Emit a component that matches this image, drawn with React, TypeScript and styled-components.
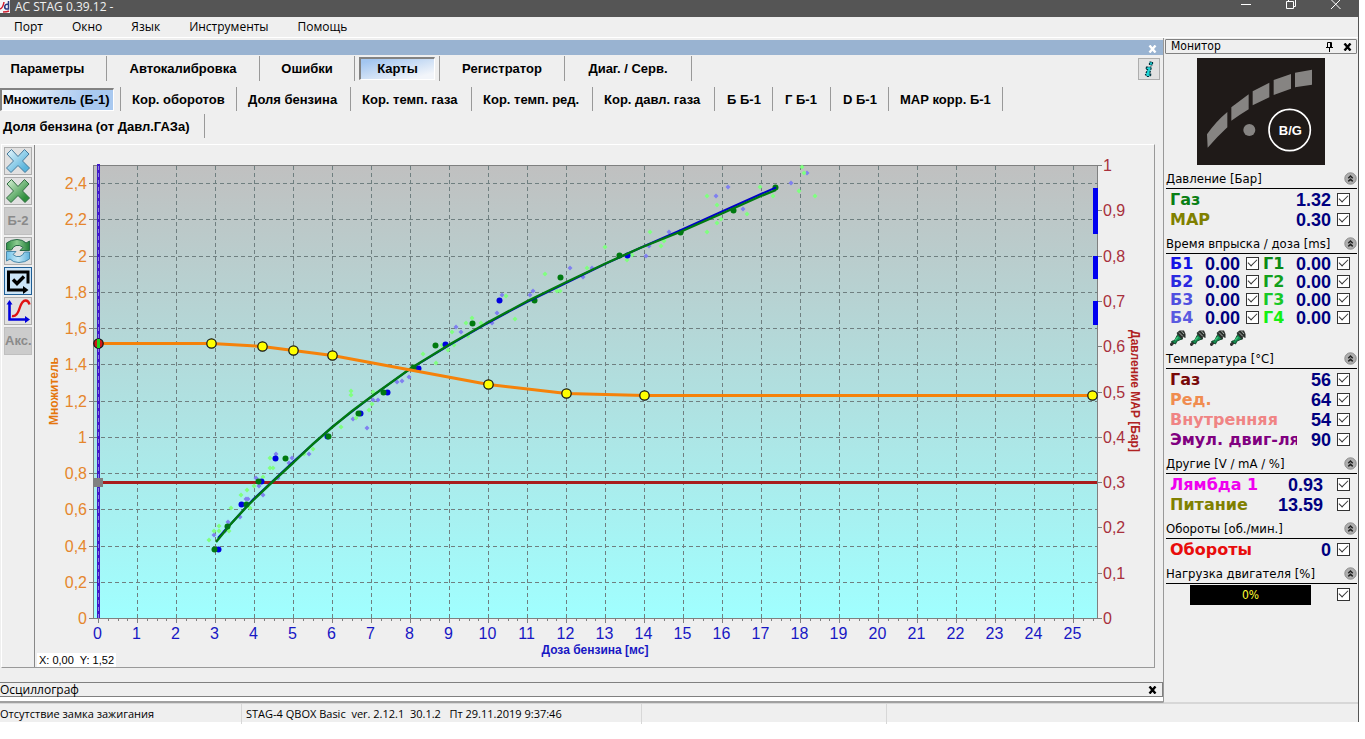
import React from "react";
import styled, { createGlobalStyle } from "styled-components";

const ui = `"Open Sans", "Noto Sans", sans-serif`;
const arial = `"Liberation Sans", Arial, sans-serif`;
const tahoma = `"DejaVu Sans Condensed", "DejaVu Sans", sans-serif`;

const Global = createGlobalStyle`
  * { box-sizing: border-box; }
  body { margin: 0; background: #fff; color: #000; font-family: ${arial}; }
  button { font: inherit; color: inherit; margin: 0; padding: 0; border: 0; background: none; white-space: nowrap; }
  svg { display: block; }
`;

const Page = styled.div`
  min-height: 100vh;
  padding: 0 6px 17px 0;
  display: flex;
  background: #fff;
`;

const Window = styled.div`
  flex: 1;
  min-width: 0;
  display: flex;
  flex-direction: column;
  background: #efefef;
  border-right: 1px solid #555;
`;

const TitleBar = styled.header`
  height: 17px;
  display: flex;
  align-items: flex-start;
  background: #555;
  color: #f0f0f0;
  font: 12px/14px ${ui};
`;

const AppName = styled.h1`
  flex: 1;
  margin: 0 0 0 5px;
  font: inherit;
`;

const WindowButton = styled.button`
  width: 45px;
  height: 10px;
  display: flex;
  justify-content: center;
`;

const MenuBar = styled.nav`
  height: 21px;
  display: flex;
  align-items: center;
  gap: 29px;
  padding-left: 14px;
  border-bottom: 1px solid #fff;
  font: 12px/16px ${ui};
`;

const Body = styled.div`
  flex: 1;
  display: flex;
  min-height: 0;
`;

const Workspace = styled.main`
  flex: 1;
  min-width: 0;
  display: flex;
  flex-direction: column;
  padding-top: 2px;
`;

const Caption = styled.div`
  height: 15px;
  display: flex;
  justify-content: flex-end;
  align-items: flex-end;
  padding: 0 6px 2px 0;
  background: #99b3d1;
`;

const TabBar = styled.div`
  display: flex;
  align-items: flex-start;
  padding-top: 1px;
`;

const TabCell = styled.div<{ $w: number; $h: number }>`
  width: ${(p) => p.$w}px;
  height: ${(p) => p.$h}px;
  display: flex;
  justify-content: center;
  align-items: center;
  border-right: 1px solid #999;
  font: bold 13px/16px ${arial};

  &:first-child {
    padding-right: 11px;
  }
`;

const Tab = styled.button<{ $on?: boolean; $across?: boolean }>`
  height: 23px;
  padding: 0 ${(p) => (p.$across ? 3 : 16)}px;
  ${(p) =>
    p.$on &&
    `
    border: 1px solid #fff;
    border-top: 2px solid #828282;
    border-left: 2px solid #828282;
    background: ${
      p.$across
        ? "linear-gradient(100deg, #f4f7fc 10%, #a9c9f0 75%)"
        : "linear-gradient(165deg, #a3c6f0 10%, #f2f5fa 85%)"
    };
  `}
`;

const Spacer = styled.div`
  flex: 1;
`;

const InfoButton = styled.button`
  width: 22px;
  height: 22px;
  margin: 2px 3px 0 0;
  display: grid;
  place-items: center;
  background: #e1e1e1;
  border: 1px solid #adadad;
`;

const MapTabs = styled.div`
  display: flex;
  flex-wrap: wrap;
  row-gap: 3px;
  padding: 6px 0;
`;

const MapCell = styled(TabCell)`
  justify-content: flex-start;
  padding: 1px 0 0 ${(p) => (p.$w === 58 ? 9 : 8)}px;

  &:first-child,
  &:last-child {
    padding-left: 0;
    padding-right: 0;
  }
  &:first-child > button {
    padding: 0 3px 0 1px;
  }
`;

const MapPage = styled.section`
  flex: 1;
  min-height: 0;
  margin: 0 8px 14px 1px;
  display: flex;
  border: 1px solid #999;
  border-top-color: #fff;
  border-left-color: #fff;
`;

const ToolBox = styled.div`
  width: 33px;
  padding: 2px;
  display: flex;
  flex-direction: column;
  gap: 2px;
  border-right: 1px solid #888;
`;

const Tool = styled.button<{ $on?: boolean }>`
  width: 28px;
  height: 28px;
  display: grid;
  place-items: center;
  background: ${(p) => (p.$on ? "#cce4f7" : "#e1e1e1")};
  border: 1px solid ${(p) => (p.$on ? "#1f5f96" : "#adadad")};
  font: bold 13px/16px ${arial};

  &:disabled {
    background: #ccc;
    border-color: #bfbfbf;
    color: #8a8a8a;
  }
`;

const ChartArea = styled.div`
  flex: 1;
  min-width: 0;
  position: relative;
`;

const Chart = styled.svg`
  width: 100%;
  height: auto;
  font-family: ${arial};
`;

const Readout = styled.output`
  position: absolute;
  left: 2px;
  bottom: 0;
  padding: 0 2px;
  background: #fff;
  font: 11px/14px ${arial};
  white-space: pre;
`;

const Dock = styled.div`
  height: 15px;
  display: flex;
  align-items: center;
  justify-content: space-between;
  padding-right: 5px;
  border: 1px solid #808080;
  border-left: 0;
  font: 12px/13px ${ui};
`;

const DockEdge = styled.div`
  height: 6px;
  border-top: 4px solid #fff;
  border-bottom: 2px solid #a0a0a0;
`;

const StatusBar = styled.footer`
  height: 19px;
  display: grid;
  grid-template-columns: 242px 400px 245px 1fr;
  border-top: 1px solid #d7d7d7;
  font: 11px/20px ${ui};
  white-space: pre;

  > span {
    padding-left: 4px;
    border-right: 1px solid #d7d7d7;
  }
  > span:first-child {
    padding-left: 0;
  }
`;

const Monitor = styled.aside`
  width: 195px;
  padding: 1px 1px 0 1px;
  border-left: 1px solid #999;
  border-bottom: 1px solid #d7d7d7;
  display: flex;
  flex-direction: column;
`;

const MonitorTitle = styled.div`
  height: 15px;
  display: flex;
  align-items: center;
  gap: 10px;
  padding: 0 4px 0 5px;
  border: 1px solid #808080;
  border-radius: 1px;
  font: 12px/13px ${tahoma};

  > span {
    flex: 1;
  }
`;

const Led = styled.svg`
  width: 128px;
  height: 107px;
  margin: 4px 0 5px 32px;
`;

const Group = styled.section`
  margin: 0 0 5px 1px;
`;

const GroupHead = styled.div`
  height: 19px;
  margin-bottom: 1px;
  display: flex;
  align-items: center;
  justify-content: space-between;
  border-bottom: 1px solid #000;

  h2 {
    margin: 0;
    font: 13px/16px ${tahoma};
    white-space: nowrap;
  }
  button {
    margin-bottom: 2px;
  }
`;

const Line = styled.div<{ $h: number }>`
  height: ${(p) => p.$h}px;
  display: flex;
  align-items: center;
  padding: 0 7px 0 4px;
`;

const Reading = styled.label<{ $inset?: boolean; $grow?: boolean }>`
  flex: ${(p) => (p.$grow ? "1" : "0 0 89px")};
  min-width: 0;
  margin-right: ${(p) => (p.$grow ? 0 : 4)}px;
  display: flex;
  align-items: center;
  justify-content: space-between;
  white-space: nowrap;

  b {
    max-width: 127px;
    overflow: hidden;
    font: bold 16px/18px "DejaVu Sans", sans-serif;
  }
  output {
    margin-left: auto;
    padding-right: ${(p) => (p.$inset ? 14 : 6)}px;
    color: #000080;
    font: bold 18px/18px ${arial};
  }
`;

const Tick = styled.input`
  appearance: none;
  flex: none;
  width: 13px;
  height: 13px;
  margin: 0 0 2px;
  display: grid;
  place-items: center;
  background: #fff;
  border: 1px solid #333;

  &:checked::after {
    content: "";
    width: 8px;
    height: 4px;
    margin-bottom: 3px;
    border-left: 1px solid #333;
    border-bottom: 1px solid #333;
    rotate: -45deg;
  }
`;

const Load = styled.label`
  height: 20px;
  display: flex;
  align-items: center;
  justify-content: space-between;
  padding: 0 7px 0 24px;

  output {
    width: 121px;
    background: #000;
    color: #ff3;
    font: 12px/20px ${tahoma};
    text-align: center;
  }
`;

const Injectors = styled.div`
  height: 18px;
  display: flex;
  gap: 4px;
  padding: 3px 0 0 4px;
`;

const Cross = ({ color }: { color: string }) => (
  <svg width="9" height="8" viewBox="0 0 9 8" aria-hidden="true">
    <path d="M1.5 .5l6 7M7.5 .5l-6 7" stroke={color} strokeWidth="2.4" fill="none" />
  </svg>
);

const Collapse = () => (
  <button type="button" aria-label="Свернуть">
    <svg width="13" height="13" viewBox="0 0 13 13">
      <circle cx="6.5" cy="6.5" r="5.7" fill="#adadad" stroke="#8d8d8d" />
      <path d="M4.3 6.2l2.200-2.200 2.200 2.200M4.300 9.400l2.200-2.200 2.200 2.200" stroke="#222" strokeWidth="1.500" fill="none" />
    </svg>
  </button>
);

const Injector = () => (
  <svg width="16" height="16" viewBox="0 0 16 16" aria-hidden="true">
    <path d="M.5 15.500l3.500-4" stroke="#333" strokeWidth="3" />
    <path d="M1.500 11.500l3-1L8 4l5 4.500-6 2.500-1.500 3z" fill="#159050" stroke="#124a2c" />
    <path d="M6.500 3l3-2.500h4.500l1.500 3.500v4l-2.500-1-1 3z" fill="#2b302c" />
    <path d="M9 2.500l4 4M11.500 1l2.500 3" stroke="#a4aca6" />
    <path d="M5 10l3-3" stroke="#3cc47c" strokeWidth="1.500" />
  </svg>
);

const BigX = ({ from, to, line }: { from: string; to: string; line: string }) => {
  const id = "x" + to.slice(1);
  return (
    <svg width="26" height="26" viewBox="0 0 26 26" aria-hidden="true">
      <defs>
        <linearGradient id={id} x1="0" y1="0" x2="1" y2="1">
          <stop offset=".1" stopColor={from} />
          <stop offset=".8" stopColor={to} />
        </linearGradient>
      </defs>
      <path
        d="M6.500 1.500L13 8.500l6.500-7 4.500 4.500-6.500 7 7 7-4.500 4.500-7-7-7 7L1.500 20l7-7-6.500-7z"
        fill={`url(#${id})`}
        stroke={line}
        strokeLinejoin="round"
      />
    </svg>
  );
};

const Refresh = () => (
  <svg width="26" height="26" viewBox="0 0 26 26" aria-hidden="true">
    <defs>
      <linearGradient id="rg" x1="0" x2="1">
        <stop offset="0" stopColor="#2f8f45" />
        <stop offset=".45" stopColor="#8ccb91" />
        <stop offset="1" stopColor="#23803a" />
      </linearGradient>
      <linearGradient id="rb" x1="0" x2="1">
        <stop offset="0" stopColor="#6cc0e8" />
        <stop offset=".5" stopColor="#c6e8f6" />
        <stop offset="1" stopColor="#5fb2dc" />
      </linearGradient>
    </defs>
    <path d="M1.500 12V5Q6 1.500 12 1.500 18 1.500 21 5L24.500 3V12.500H15L18 9.500Q15 6.500 11 7.500 8 8.500 6.500 12z" fill="url(#rg)" stroke="#2a6a48" />
    <path d="M24.500 14V21Q20 24.500 14 24.500 8 24.500 5 21L1.500 23V13.500H11L8 16.500Q11 19.500 15 18.500 18 17.500 19.500 14z" fill="url(#rb)" stroke="#4a87a8" />
  </svg>
);

const CheckFrame = () => (
  <svg width="26" height="26" viewBox="0 0 26 26" fill="none" stroke="#000" aria-hidden="true">
    <path d="M23 15.500V4H3.500v18H18" strokeWidth="3" />
    <path d="M8 11.500l4 4 7-7" strokeWidth="3.400" />
    <path d="M18 18l5.500 4-5.500 4z" fill="#000" stroke="none" />
  </svg>
);

const Curve = () => (
  <svg width="26" height="26" viewBox="0 0 26 26" fill="none" aria-hidden="true">
    <path d="M4.500 4v17.500H22" stroke="#00d" strokeWidth="2.600" />
    <path d="M1.500 6.500l3-4.500 3 4.500zM20 18l5 3.500-5 3.500z" fill="#00d" />
    <path d="M7 18q5 1 7.500-7.500Q17 2.500 20.500 2.500q3 0 4 4" stroke="#e01010" strokeWidth="2.400" />
  </svg>
);

const mainTabs: [string, number][] = [
  ["Параметры", 107],
  ["Автокалибровка", 153],
  ["Ошибки", 95],
  ["Карты", 85],
  ["Регистратор", 125],
  ["Диаг. / Серв.", 127],
];

const mapTabs: [string, number][] = [
  ["Множитель (Б-1)", 121],
  ["Кор. оборотов", 116],
  ["Доля бензина", 114],
  ["Кор. темп. газа", 121],
  ["Кор. темп. ред.", 121],
  ["Кор. давл. газа", 122],
  ["Б Б-1", 58],
  ["Г Б-1", 58],
  ["D Б-1", 58],
  ["МАР корр. Б-1", 114],
  ["Доля бензина (от Давл.ГАЗа)", 205],
];

const px = (v: number) => 98.5 + 39 * v;
const py = (v: number) => 618.5 - 181.2 * v;
const pr = (v: number) => 618.5 - 453 * v;
const comma = (v: number) => String(Math.round(v * 10) / 10).replace(".", ",");
const range = (n: number) => Array.from({ length: n }, (_, i) => i);

const gasMinor =
  "209,540 214,531 219,526 219,531 229,531 231,508 250,508 241,495 247,490 254,486 263,477 270,468 273,468 270,458 313,449 304,454 351,391 351,395 341,427 356,418 369,410 372,404 373,392 423,354 436,363 442,345 448,350 454,345 452,332 466,323 472,318 481,323 468,336 506,296 515,319 545,274 557,291 560,291 587,268 627,260 632,255 605,247 650,232 661,246 664,241 707,232 717,223 721,219 717,205 707,196 747,214 760,187 773,196 799,191 815,196 802,167 804,173";
const petrolMinor =
  "214,535 228,522 240,517 225,531 246,499 248,499 256,478 259,486 263,495 276,454 292,458 309,454 278,478 289,463 353,419 373,400 378,400 397,382 402,381 409,377 367,428 456,327 461,332 487,323 492,323 497,313 502,295 530,295 533,291 570,268 583,277 592,268 646,256 649,246 669,232 716,196 728,187 743,209 791,183 807,173";
const gasMajor =
  "214,549 227,526 246,504 258,481 285,458 328,436 358,413 383,392 413,367 435,345 472,323 534,300 560,277 619,255 680,232 733,210 775,187";
const petrolMajor = "218,549 241,504 261,481 275,458 327,436 360,413 387,392 418,368 445,344 499,300 627,255";

const spots = (s: string) => s.split(" ").map((p) => p.split(",").map(Number));
const multiplier: [number, number][] = [
  [98.5, 343.5], [211.5, 343.5], [262.5, 346.5], [293.5, 350.5], [332.5, 355.5],
  [488.5, 384.5], [566.5, 393.5], [644.5, 395.5], [1092.5, 395.5],
];

const Minor = ({ data, color }: { data: string; color: string }) => (
  <g fill={color}>
    {spots(data).map(([x, y], i) => (
      <path key={i} d={`M${x - 2.5} ${y}l2.500-2.500 2.500 2.500-2.500 2.500z`} />
    ))}
  </g>
);

const Major = ({ data, color }: { data: string; color: string }) => (
  <g fill={color}>
    {spots(data).map(([x, y], i) => (
      <circle key={i} cx={x + 0.5} cy={y + 0.5} r="3" />
    ))}
  </g>
);

const MapChart = () => (
  <Chart viewBox="35 145 1119 521" role="img" aria-label="Множитель">
    <defs>
      <linearGradient id="sky" x1="0" y1="0" x2="0" y2="1">
        <stop offset="0" stopColor="#c0c0c0" />
        <stop offset="1" stopColor="#a0ffff" />
      </linearGradient>
    </defs>
    <rect x="93.500" y="165.500" width="1004" height="453" fill="url(#sky)" stroke="#7f8080" />
    <g stroke="#6f7f80" strokeDasharray="4 3">
      {range(26).map((i) => (
        <path key={i} d={`M${px(i)} 166V618`} />
      ))}
      {range(12).map((i) => (
        <path key={i} d={`M94 ${Math.floor(py((i + 1) / 5)) + 0.5}H1097`} />
      ))}
    </g>
    <g stroke="#7f8080">
      {range(26).map((i) => (
        <path key={i} d={`M${px(i)} 618v5`} />
      ))}
      {range(103).map((i) => (
        <path key={i} d={`M${Math.floor(px(i / 4)) + 0.5} 618v3`} />
      ))}
      {range(13).map((i) => (
        <path key={i} d={`M89 ${Math.floor(py(i / 5)) + 0.5}h4`} />
      ))}
      {range(11).map((i) => (
        <path key={i} d={`M1098 ${Math.floor(pr(i / 10)) + 0.5}h4`} />
      ))}
    </g>
    <g fontSize="16">
      <g fill="#e5862c" textAnchor="end">
        {range(13).map((i) => (
          <text key={i} x="87" y={Math.floor(py(i / 5)) + 6}>{comma(i / 5)}</text>
        ))}
      </g>
      <g fill="#a8303c">
        {range(11).map((i) => (
          <text key={i} x="1103" y={Math.floor(pr(i / 10)) + 6}>{comma(i / 10)}</text>
        ))}
      </g>
      <g fill="#1717c4" textAnchor="middle">
        {range(26).map((i) => (
          <text key={i} x={px(i) - 1} y="639">{i}</text>
        ))}
      </g>
    </g>
    <g fontWeight="bold" textAnchor="middle">
      <text x="595" y="654" fontSize="12" fill="#1717c4">Доза бензина [мс]</text>
      <text transform="translate(58 391) rotate(-90)" fontSize="12" fill="#e5760c">Множитель</text>
      <text transform="translate(1131 391) rotate(90)" fontSize="12" fill="#b02222">Давление МАР [Бар]</text>
    </g>
    <path d="M94 482.500H1097" stroke="#a81c1c" strokeWidth="3" />
    <Minor data={petrolMinor} color="#8080f0" />
    <Minor data={gasMinor} color="#80ff80" />
    <Major data={petrolMajor} color="#0000e0" />
    <Major data={gasMajor} color="#007a10" />
    <path d="M218 538L253 499.500 293 462 332 427 371 397 410 369 449 345.500 488 323 527 302 566 283 605 264 640 248 680 230.500 722 211.500 761 194 776 187.500" fill="none" stroke="#0000c8" strokeWidth="2" />
    <path d="M216 542Q233 520 253.500 500 273 481 293.500 462.500 312 444 332.500 427 351 411 371.500 396.500L410.500 368.500 449.500 344.500 488.500 322 527.500 301 566.500 282 605.500 263.500 640 248 680 232 722 213.500 761 196 776 190" fill="none" stroke="#007a10" strokeWidth="2.400" />
    <g stroke="#0000f0" strokeWidth="5">
      <path d="M1095.500 188v46M1095.500 256v23M1095.500 301v24" />
    </g>
    <path d="M98.500 164V618" stroke="#4018c8" strokeWidth="3" />
    <path d="M98.500 166V618" stroke="#8a86dc" strokeDasharray="4 3" />
    <rect x="94" y="478" width="9" height="9" fill="#808080" />
    <polyline points={multiplier.map((p) => p.join()).join(" ")} fill="none" stroke="#f5820a" strokeWidth="3" />
    {multiplier.map(([x, y], i) => (
      <circle key={i} cx={x} cy={y} r="4.700" fill={i ? "#ff0" : "#d01818"} stroke="#111" strokeWidth="1.200" />
    ))}
    <path d="M98.500 339v9" stroke="#20d020" strokeWidth="3" />
  </Chart>
);

type ValueProps = { name: string; value: string; color: string; inset?: boolean; grow?: boolean };

const Value = ({ name, value, color, inset, grow = true }: ValueProps) => (
  <Reading $inset={inset} $grow={grow}>
    <b style={{ color }}>{name}</b>
    <output>{value}</output>
    <Tick type="checkbox" defaultChecked />
  </Reading>
);

const Head = ({ children }: { children: React.ReactNode }) => (
  <GroupHead>
    <h2>{children}</h2>
    <Collapse />
  </GroupHead>
);

const petrol = ["#1414e6", "#2a2ae0", "#5050e0", "#5a5ae0"];
const gas = ["#0a8a14", "#12a01c", "#18c828", "#14f014"];

export default function App() {
  return (
    <Page>
      <Global />
      <Window>
        <TitleBar>
          <svg width="10" height="14" viewBox="0 0 10 14" aria-hidden="true">
            <path d="M0 0h10v13H0z" fill="#f4f4f8" />
            <path d="M0 9q3-1 4-7M3 12q4 0 6-1" stroke="#d02030" strokeWidth="1.500" fill="none" />
            <path d="M8.500 1v8H6q-2-1-1-3.500 1-2 3.500-1" stroke="#283a80" strokeWidth="1.500" fill="none" />
          </svg>
          <AppName>AC STAG 0.39.12 -</AppName>
          <WindowButton type="button" aria-label="Свернуть">
            <svg width="10" height="10" stroke="#fff"><path d="M0 4.500h10" /></svg>
          </WindowButton>
          <WindowButton type="button" aria-label="Восстановить">
            <svg width="10" height="10" stroke="#fff" fill="none"><path d="M.5 1.500h7v7h-7zM2.500 1.500v-2M9.500-1v7.500h-2" /></svg>
          </WindowButton>
          <WindowButton type="button" aria-label="Закрыть">
            <svg width="10" height="10" stroke="#fff"><path d="M0-.5l9.500 9.500M9.500-.5L0 9" /></svg>
          </WindowButton>
        </TitleBar>
        <MenuBar>
          {["Порт", "Окно", "Язык", "Инструменты", "Помощь"].map((m) => (
            <button key={m} type="button">{m}</button>
          ))}
        </MenuBar>
        <Body>
          <Workspace>
            <Caption>
              <button type="button" aria-label="Закрыть"><Cross color="#fff" /></button>
            </Caption>
            <TabBar>
              {mainTabs.map(([t, w]) => (
                <TabCell key={t} $w={w} $h={25}>
                  <Tab type="button" $on={t === "Карты"}>{t}</Tab>
                </TabCell>
              ))}
              <Spacer />
              <InfoButton type="button" aria-label="Информация">
                <svg width="10" height="17" viewBox="0 0 10 17">
                  <path d="M5.500 1h3v3h-3zM2.500 6h5L5.500 13h2l-2 2.500H3L1.500 13.500 3.500 8.500H2z" fill="#20d8d8" stroke="#052c38" strokeWidth="1.200" strokeDasharray="2 1" />
                </svg>
              </InfoButton>
            </TabBar>
            <MapTabs>
              {mapTabs.map(([t, w], i) => (
                <MapCell key={t} $w={w} $h={24}>
                  <Tab type="button" $on={i === 0} $across>{t}</Tab>
                </MapCell>
              ))}
            </MapTabs>
            <MapPage>
              <ToolBox>
                <Tool type="button" aria-label="Очистить бензин"><BigX from="#d8f0fa" to="#5ab4dc" line="#46799a" /></Tool>
                <Tool type="button" aria-label="Очистить газ"><BigX from="#c8e8c8" to="#2e8f3c" line="#2f6b40" /></Tool>
                <Tool type="button" disabled>Б-2</Tool>
                <Tool type="button" aria-label="Обновить"><Refresh /></Tool>
                <Tool type="button" $on aria-label="Отметить"><CheckFrame /></Tool>
                <Tool type="button" aria-label="Кривая"><Curve /></Tool>
                <Tool type="button" disabled>Акс.</Tool>
              </ToolBox>
              <ChartArea>
                <MapChart />
                <Readout>{"X: 0,00  Y: 1,52"}</Readout>
              </ChartArea>
            </MapPage>
            <Dock>
              <span>Осциллограф</span>
              <button type="button" aria-label="Закрыть"><Cross color="#000" /></button>
            </Dock>
            <DockEdge />
          </Workspace>
          <Monitor>
            <MonitorTitle>
              <span>Монитор</span>
              <button type="button" aria-label="Закрепить">
                <svg width="7" height="10" viewBox="0 0 7 10" stroke="#000" fill="none">
                  <path d="M1.500 5.500v-5h4v5M4.500.5v5M0 5.500h7M3.500 5.500V10" />
                </svg>
              </button>
              <button type="button" aria-label="Закрыть"><Cross color="#000" /></button>
            </MonitorTitle>
            <Led viewBox="36 24 384 321" role="img" aria-label="B/G">
              <path d="M36 24h384v321H36z" fill="#1f1a18" />
              <g fill="#868482">
                <path d="M66 253Q92 215 127 186V232Q95 262 68 293zM139 172L191 133V178Q165 194 139 212zM203 124L253 98V142L203 166zM266 90L318 72V116L266 135zM330 68L381 59V104L330 112z" />
                <circle cx="193" cy="240" r="18" />
              </g>
              <circle cx="314" cy="240" r="62" fill="none" stroke="#fff" strokeWidth="5" />
              <text x="316" y="254" fontSize="39" fontWeight="bold" fill="#fff" textAnchor="middle">B/G</text>
            </Led>
            <Group>
              <Head>Давление [Бар]</Head>
              <Line $h={20}><Value name="Газ" value="1.32" color="#0a7f14" /></Line>
              <Line $h={20}><Value name="МАР" value="0.30" color="#808000" /></Line>
            </Group>
            <Group>
              <Head>Время впрыска / доза [ms]</Head>
              {[0, 1, 2, 3].map((i) => (
                <Line key={i} $h={18}>
                  <Value grow={false} name={`Б${i + 1}`} value="0.00" color={petrol[i]} />
                  <Value name={`Г${i + 1}`} value="0.00" color={gas[i]} />
                </Line>
              ))}
              <Injectors><Injector /><Injector /><Injector /><Injector /></Injectors>
            </Group>
            <Group>
              <Head>Температура [°C]</Head>
              <Line $h={20}><Value name="Газ" value="56" color="#780808" /></Line>
              <Line $h={20}><Value name="Ред." value="64" color="#f08c50" /></Line>
              <Line $h={20}><Value name="Внутренняя" value="54" color="#f08484" /></Line>
              <Line $h={20}><Value name="Эмул. двиг-ля" value="90" color="#800080" /></Line>
            </Group>
            <Group>
              <Head>Другие [V / mA / %]</Head>
              <Line $h={20}><Value inset name="Лямбда 1" value="0.93" color="#f000f0" /></Line>
              <Line $h={20}><Value inset name="Питание" value="13.59" color="#808000" /></Line>
            </Group>
            <Group>
              <Head>Обороты [об./мин.]</Head>
              <Line $h={20}><Value name="Обороты" value="0" color="#e80c0c" /></Line>
            </Group>
            <Group>
              <Head>Нагрузка двигателя [%]</Head>
              <Load>
                <output>0%</output>
                <Tick type="checkbox" defaultChecked />
              </Load>
            </Group>
          </Monitor>
        </Body>
        <StatusBar>
          <span>Отсутствие замка зажигания</span>
          <span>{"STAG-4 QBOX Basic  ver. 2.12.1  30.1.2   Пт 29.11.2019 9:37:46"}</span>
          <span />
        </StatusBar>
      </Window>
    </Page>
  );
}
